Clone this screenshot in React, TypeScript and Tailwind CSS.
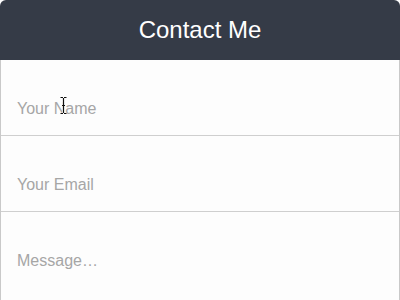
import React from "react";

const FIELDS = ["Your Name", "Your Email", "Message…"];

function IBeam() {
  return (
    <svg width="7" height="17" viewBox="0 0 7 17" className="absolute left-[59px] top-[37px]">
      <path d="M0.5 0.5h2.5v16h-2.5M6.5 0.5h-2.5v16h2.5" fill="none" stroke="#fff" strokeWidth="1.6" />
      <path d="M0.5 0.5h2.5M4 0.5h2.5M3.5 1v15M0.5 16.5h2.5M4 16.5h2.5M2 8.5h3" fill="none" stroke="#111" strokeWidth="1.2" />
    </svg>
  );
}

export default function App() {
  return (
    <div className="w-[400px] h-[300px] overflow-hidden bg-white" style={{ fontFamily: '"Liberation Sans", Arial, sans-serif' }}>
      <div className="h-[60px] bg-[#353b47] rounded-t-[6px] flex items-center justify-center">
        <h1 className="text-white text-[24px] leading-none">Contact Me</h1>
      </div>
      <div className="flex flex-col border-x border-[#c9c9c9] bg-[#fdfdfd] h-[240px]">
        {FIELDS.map((f, i) => (
          <div key={f}
            className={`relative pl-[16px] pt-[37px] text-[16px] leading-[24px] text-[#a6a6a6] ${i < 2 ? "h-[76px] border-b border-[#cfcfcf]" : "flex-1"}`}>
            {f}
            {i === 0 && <IBeam />}
          </div>
        ))}
      </div>
    </div>
  );
}
